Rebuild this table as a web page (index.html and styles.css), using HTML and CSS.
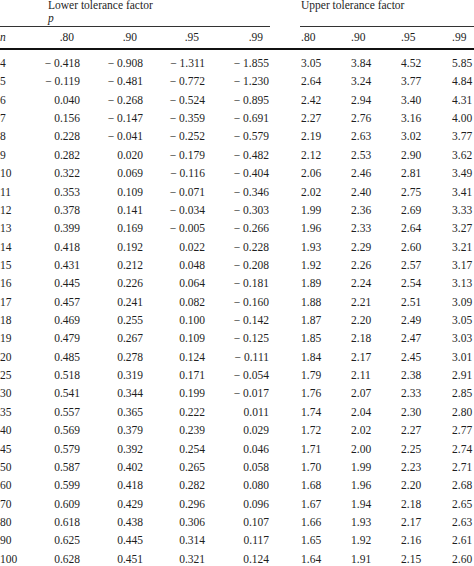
FILE: index.html
```html
<!DOCTYPE html>
<html>
<head>
<meta charset="utf-8">
<link rel="stylesheet" href="styles.css">
</head>
<body>
<div class="table">
  <div class="row groups">
    <div class="group lower"><div class="group-title">Lower tolerance factor</div><div class="group-title it">p</div></div>
    <div class="group upper"><div class="group-title up">Upper tolerance factor</div></div>
  </div>
  <div class="row heads">
    <div class="n it">n</div>
    <div class="l">.80</div><div class="l">.90</div><div class="l">.95</div><div class="l">.99</div>
    <div class="gap"></div>
    <div class="u">.80</div><div class="u">.90</div><div class="u">.95</div><div class="u">.99</div>
  </div>
  <div class="tbody">
    <div class="row data"><div class="n">4</div><div class="l">− 0.418</div><div class="l">− 0.908</div><div class="l">− 1.311</div><div class="l">− 1.855</div><div class="gap"></div><div class="u">3.05</div><div class="u">3.84</div><div class="u">4.52</div><div class="u">5.85</div></div>
    <div class="row data"><div class="n">5</div><div class="l">− 0.119</div><div class="l">− 0.481</div><div class="l">− 0.772</div><div class="l">− 1.230</div><div class="gap"></div><div class="u">2.64</div><div class="u">3.24</div><div class="u">3.77</div><div class="u">4.84</div></div>
    <div class="row data"><div class="n">6</div><div class="l">0.040</div><div class="l">− 0.268</div><div class="l">− 0.524</div><div class="l">− 0.895</div><div class="gap"></div><div class="u">2.42</div><div class="u">2.94</div><div class="u">3.40</div><div class="u">4.31</div></div>
    <div class="row data"><div class="n">7</div><div class="l">0.156</div><div class="l">− 0.147</div><div class="l">− 0.359</div><div class="l">− 0.691</div><div class="gap"></div><div class="u">2.27</div><div class="u">2.76</div><div class="u">3.16</div><div class="u">4.00</div></div>
    <div class="row data"><div class="n">8</div><div class="l">0.228</div><div class="l">− 0.041</div><div class="l">− 0.252</div><div class="l">− 0.579</div><div class="gap"></div><div class="u">2.19</div><div class="u">2.63</div><div class="u">3.02</div><div class="u">3.77</div></div>
    <div class="row data"><div class="n">9</div><div class="l">0.282</div><div class="l">0.020</div><div class="l">− 0.179</div><div class="l">− 0.482</div><div class="gap"></div><div class="u">2.12</div><div class="u">2.53</div><div class="u">2.90</div><div class="u">3.62</div></div>
    <div class="row data"><div class="n">10</div><div class="l">0.322</div><div class="l">0.069</div><div class="l">− 0.116</div><div class="l">− 0.404</div><div class="gap"></div><div class="u">2.06</div><div class="u">2.46</div><div class="u">2.81</div><div class="u">3.49</div></div>
    <div class="row data"><div class="n">11</div><div class="l">0.353</div><div class="l">0.109</div><div class="l">− 0.071</div><div class="l">− 0.346</div><div class="gap"></div><div class="u">2.02</div><div class="u">2.40</div><div class="u">2.75</div><div class="u">3.41</div></div>
    <div class="row data"><div class="n">12</div><div class="l">0.378</div><div class="l">0.141</div><div class="l">− 0.034</div><div class="l">− 0.303</div><div class="gap"></div><div class="u">1.99</div><div class="u">2.36</div><div class="u">2.69</div><div class="u">3.33</div></div>
    <div class="row data"><div class="n">13</div><div class="l">0.399</div><div class="l">0.169</div><div class="l">− 0.005</div><div class="l">− 0.266</div><div class="gap"></div><div class="u">1.96</div><div class="u">2.33</div><div class="u">2.64</div><div class="u">3.27</div></div>
    <div class="row data"><div class="n">14</div><div class="l">0.418</div><div class="l">0.192</div><div class="l">0.022</div><div class="l">− 0.228</div><div class="gap"></div><div class="u">1.93</div><div class="u">2.29</div><div class="u">2.60</div><div class="u">3.21</div></div>
    <div class="row data"><div class="n">15</div><div class="l">0.431</div><div class="l">0.212</div><div class="l">0.048</div><div class="l">− 0.208</div><div class="gap"></div><div class="u">1.92</div><div class="u">2.26</div><div class="u">2.57</div><div class="u">3.17</div></div>
    <div class="row data"><div class="n">16</div><div class="l">0.445</div><div class="l">0.226</div><div class="l">0.064</div><div class="l">− 0.181</div><div class="gap"></div><div class="u">1.89</div><div class="u">2.24</div><div class="u">2.54</div><div class="u">3.13</div></div>
    <div class="row data"><div class="n">17</div><div class="l">0.457</div><div class="l">0.241</div><div class="l">0.082</div><div class="l">− 0.160</div><div class="gap"></div><div class="u">1.88</div><div class="u">2.21</div><div class="u">2.51</div><div class="u">3.09</div></div>
    <div class="row data"><div class="n">18</div><div class="l">0.469</div><div class="l">0.255</div><div class="l">0.100</div><div class="l">− 0.142</div><div class="gap"></div><div class="u">1.87</div><div class="u">2.20</div><div class="u">2.49</div><div class="u">3.05</div></div>
    <div class="row data"><div class="n">19</div><div class="l">0.479</div><div class="l">0.267</div><div class="l">0.109</div><div class="l">− 0.125</div><div class="gap"></div><div class="u">1.85</div><div class="u">2.18</div><div class="u">2.47</div><div class="u">3.03</div></div>
    <div class="row data"><div class="n">20</div><div class="l">0.485</div><div class="l">0.278</div><div class="l">0.124</div><div class="l">− 0.111</div><div class="gap"></div><div class="u">1.84</div><div class="u">2.17</div><div class="u">2.45</div><div class="u">3.01</div></div>
    <div class="row data"><div class="n">25</div><div class="l">0.518</div><div class="l">0.319</div><div class="l">0.171</div><div class="l">− 0.054</div><div class="gap"></div><div class="u">1.79</div><div class="u">2.11</div><div class="u">2.38</div><div class="u">2.91</div></div>
    <div class="row data"><div class="n">30</div><div class="l">0.541</div><div class="l">0.344</div><div class="l">0.199</div><div class="l">− 0.017</div><div class="gap"></div><div class="u">1.76</div><div class="u">2.07</div><div class="u">2.33</div><div class="u">2.85</div></div>
    <div class="row data"><div class="n">35</div><div class="l">0.557</div><div class="l">0.365</div><div class="l">0.222</div><div class="l">0.011</div><div class="gap"></div><div class="u">1.74</div><div class="u">2.04</div><div class="u">2.30</div><div class="u">2.80</div></div>
    <div class="row data"><div class="n">40</div><div class="l">0.569</div><div class="l">0.379</div><div class="l">0.239</div><div class="l">0.029</div><div class="gap"></div><div class="u">1.72</div><div class="u">2.02</div><div class="u">2.27</div><div class="u">2.77</div></div>
    <div class="row data"><div class="n">45</div><div class="l">0.579</div><div class="l">0.392</div><div class="l">0.254</div><div class="l">0.046</div><div class="gap"></div><div class="u">1.71</div><div class="u">2.00</div><div class="u">2.25</div><div class="u">2.74</div></div>
    <div class="row data"><div class="n">50</div><div class="l">0.587</div><div class="l">0.402</div><div class="l">0.265</div><div class="l">0.058</div><div class="gap"></div><div class="u">1.70</div><div class="u">1.99</div><div class="u">2.23</div><div class="u">2.71</div></div>
    <div class="row data"><div class="n">60</div><div class="l">0.599</div><div class="l">0.418</div><div class="l">0.282</div><div class="l">0.080</div><div class="gap"></div><div class="u">1.68</div><div class="u">1.96</div><div class="u">2.20</div><div class="u">2.68</div></div>
    <div class="row data"><div class="n">70</div><div class="l">0.609</div><div class="l">0.429</div><div class="l">0.296</div><div class="l">0.096</div><div class="gap"></div><div class="u">1.67</div><div class="u">1.94</div><div class="u">2.18</div><div class="u">2.65</div></div>
    <div class="row data"><div class="n">80</div><div class="l">0.618</div><div class="l">0.438</div><div class="l">0.306</div><div class="l">0.107</div><div class="gap"></div><div class="u">1.66</div><div class="u">1.93</div><div class="u">2.17</div><div class="u">2.63</div></div>
    <div class="row data"><div class="n">90</div><div class="l">0.625</div><div class="l">0.445</div><div class="l">0.314</div><div class="l">0.117</div><div class="gap"></div><div class="u">1.65</div><div class="u">1.92</div><div class="u">2.16</div><div class="u">2.61</div></div>
    <div class="row data"><div class="n">100</div><div class="l">0.628</div><div class="l">0.451</div><div class="l">0.321</div><div class="l">0.124</div><div class="gap"></div><div class="u">1.64</div><div class="u">1.91</div><div class="u">2.15</div><div class="u">2.60</div></div>
  </div>
</div>
</body>
</html>
```

FILE: styles.css
```css
html, body {
  margin: 0;
  padding: 0;
  background: #ffffff;
}

body {
  width: 474px;
  height: 566px;
  overflow: hidden;
  font-family: "Liberation Serif", "Times New Roman", serif;
  font-size: 11.5px;
  color: #1e1e1e;
}

.table {
  width: 474px;
}

.row {
  display: grid;
  grid-template-columns: 20px 60px 63px 62px 64px 32px 50px 50px 51px 22px;
}

.group {
  height: 26px;
  border-bottom: 1px solid #333333;
}

.group.lower {
  grid-column: 1 / 6;
  padding-left: 48px;
  margin-right: -1px;
}

.group.upper {
  grid-column: 7 / 11;
  margin-left: -1px;
}

.group-title {
  line-height: 12.5px;
  white-space: nowrap;
}

.group-title:first-child {
  margin-top: -1px;
}

.group-title.up {
  padding-left: 1px;
}

.it {
  font-style: italic;
}

.heads {
  height: 21px;
  line-height: 21px;
  border-bottom: 2px solid #111111;
}

.heads .l {
  padding-right: 6px;
}

.tbody {
  padding-top: 4px;
}

.data {
  height: 18.37px;
  line-height: 18.37px;
}

.n {
  text-align: left;
  white-space: nowrap;
}

.l {
  text-align: right;
  white-space: nowrap;
}

.u {
  text-align: left;
  white-space: nowrap;
}
```
